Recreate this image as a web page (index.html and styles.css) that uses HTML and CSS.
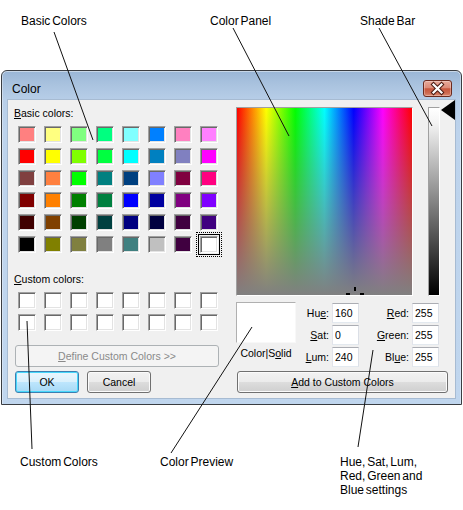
FILE: index.html
```html
<!DOCTYPE html>
<html>
<head>
<meta charset="utf-8">
<link rel="stylesheet" href="styles.css">
</head>
<body>
<div class="page">
  <div class="window">
    <div class="titlebar">
      <span class="title">Color</span>
      <button class="close" aria-label="Close">
        <svg width="29" height="17" viewBox="0 0 29 17">
          <path d="M10.5 4.5 L18.5 12.5 M18.5 4.5 L10.5 12.5" stroke="#4a1a12" stroke-width="4.2" stroke-linecap="square" fill="none"/>
          <path d="M10.5 4.5 L18.5 12.5 M18.5 4.5 L10.5 12.5" stroke="#ffffff" stroke-width="2.2" stroke-linecap="square" fill="none"/>
        </svg>
      </button>
    </div>
    <div class="client">
      <div class="left">
        <div class="label"><u>B</u>asic colors:</div>
        <div class="swatches">
          <span class="sw" style="background:#ff8080"></span><span class="sw" style="background:#ffff80"></span><span class="sw" style="background:#80ff80"></span><span class="sw" style="background:#00ff80"></span><span class="sw" style="background:#80ffff"></span><span class="sw" style="background:#0080ff"></span><span class="sw" style="background:#ff80c0"></span><span class="sw" style="background:#ff80ff"></span>
          <span class="sw" style="background:#ff0000"></span><span class="sw" style="background:#ffff00"></span><span class="sw" style="background:#80ff00"></span><span class="sw" style="background:#00ff40"></span><span class="sw" style="background:#00ffff"></span><span class="sw" style="background:#0080c0"></span><span class="sw" style="background:#8080c0"></span><span class="sw" style="background:#ff00ff"></span>
          <span class="sw" style="background:#804040"></span><span class="sw" style="background:#ff8040"></span><span class="sw" style="background:#00ff00"></span><span class="sw" style="background:#008080"></span><span class="sw" style="background:#004080"></span><span class="sw" style="background:#8080ff"></span><span class="sw" style="background:#800040"></span><span class="sw" style="background:#ff0080"></span>
          <span class="sw" style="background:#800000"></span><span class="sw" style="background:#ff8000"></span><span class="sw" style="background:#008000"></span><span class="sw" style="background:#008040"></span><span class="sw" style="background:#0000ff"></span><span class="sw" style="background:#0000a0"></span><span class="sw" style="background:#800080"></span><span class="sw" style="background:#8000ff"></span>
          <span class="sw" style="background:#400000"></span><span class="sw" style="background:#804000"></span><span class="sw" style="background:#004000"></span><span class="sw" style="background:#004040"></span><span class="sw" style="background:#000080"></span><span class="sw" style="background:#000040"></span><span class="sw" style="background:#400040"></span><span class="sw" style="background:#400080"></span>
          <span class="sw" style="background:#000000"></span><span class="sw" style="background:#808000"></span><span class="sw" style="background:#808040"></span><span class="sw" style="background:#808080"></span><span class="sw" style="background:#408080"></span><span class="sw" style="background:#c0c0c0"></span><span class="sw" style="background:#400040"></span><span class="sw sel" style="background:#ffffff"></span>
        </div>
        <div class="label custom-label"><u>C</u>ustom colors:</div>
        <div class="swatches custom">
          <span class="sw"></span><span class="sw"></span><span class="sw"></span><span class="sw"></span><span class="sw"></span><span class="sw"></span><span class="sw"></span><span class="sw"></span>
          <span class="sw"></span><span class="sw"></span><span class="sw"></span><span class="sw"></span><span class="sw"></span><span class="sw"></span><span class="sw"></span><span class="sw"></span>
        </div>
        <button class="btn define" disabled><u>D</u>efine Custom Colors &gt;&gt;</button>
        <div class="btn-row">
          <button class="btn default">OK</button>
          <button class="btn">Cancel</button>
        </div>
      </div>
      <div class="right">
        <div class="picker">
          <div class="spectrum">
            <svg class="cross" width="22" height="11" viewBox="0 0 22 11">
              <rect x="10" y="2" width="2" height="4" fill="#000"/>
              <rect x="2" y="8" width="4" height="2" fill="#000"/>
              <rect x="16" y="8" width="4" height="2" fill="#000"/>
            </svg>
          </div>
          <div class="shade"><span class="arrow"></span></div>
        </div>
        <div class="fields">
          <div class="preview"></div>
          <div class="flabel">Hu<u>e</u>:</div><input class="num" type="text" value="160">
          <div class="flabel"><u>R</u>ed:</div><input class="num" type="text" value="255">
          <div class="flabel"><u>S</u>at:</div><input class="num" type="text" value="0">
          <div class="flabel"><u>G</u>reen:</div><input class="num" type="text" value="255">
          <div class="caption">Color|S<u>o</u>lid</div>
          <div class="flabel"><u>L</u>um:</div><input class="num" type="text" value="240">
          <div class="flabel">Bl<u>u</u>e:</div><input class="num" type="text" value="255">
        </div>
        <button class="btn add"><u>A</u>dd to Custom Colors</button>
      </div>
    </div>
  </div>

  <div class="note n-basic">Basic Colors</div>
  <div class="note n-panel">Color Panel</div>
  <div class="note n-shade">Shade Bar</div>
  <div class="note n-custom">Custom Colors</div>
  <div class="note n-preview">Color Preview</div>
  <div class="note n-settings">Hue, Sat, Lum,<br>Red, Green and<br>Blue settings</div>

  <svg class="leaders" width="463" height="510" viewBox="0 0 463 510">
    <g stroke="#111" stroke-width="1" fill="none">
      <line x1="54" y1="32" x2="93" y2="140"/>
      <line x1="233" y1="28" x2="289" y2="136"/>
      <line x1="379" y1="28" x2="432" y2="126"/>
      <line x1="27" y1="321" x2="32" y2="449"/>
      <line x1="252" y1="327" x2="171" y2="453"/>
      <line x1="373" y1="350" x2="358" y2="447"/>
    </g>
  </svg>
</div>
</body>
</html>
```
FILE: styles.css
```css
html, body {
  margin: 0;
  padding: 0;
  background: #ffffff;
}

.page {
  position: relative;
  width: 463px;
  height: 510px;
  overflow: hidden;
  font-family: "Liberation Sans", Arial, sans-serif;
  color: #000;
}

.window {
  margin: 70px 0 0 1px;
  width: 461px;
  height: 335px;
  box-sizing: border-box;
  border: 1px solid #3a3d42;
  border-radius: 6px 6px 0 0;
  padding: 0 6px 6px 6px;
  background: linear-gradient(to bottom, #9ab6d6 0px, #aac3df 14px, #b7cee8 29px, #bdd3ec 60px, #c0d6ee 100%);
  box-shadow: inset 0 1px 0 rgba(255,255,255,0.45), inset 1px 0 0 rgba(255,255,255,0.35), inset -1px 0 0 rgba(255,255,255,0.35);
  font-size: 10.5px;
}

.titlebar {
  height: 29px;
  box-sizing: border-box;
  padding: 6px 3px 0 4px;
  display: flex;
  align-items: center;
  justify-content: space-between;
}

.title {
  font-size: 12px;
  color: #000;
}

.close {
  width: 29px;
  height: 17px;
  padding: 0;
  margin: 0;
  border: 1px solid #6b2a1e;
  border-radius: 3px;
  background: linear-gradient(to bottom, #e8a99a 0%, #dc8b78 45%, #c8553c 52%, #cd6a50 80%, #dd8a70 100%);
  box-shadow: inset 0 0 0 1px rgba(255,255,255,0.3);
  display: flex;
  align-items: center;
  justify-content: center;
  box-sizing: border-box;
}

.close svg {
  display: block;
  margin: -1px;
}

.client {
  height: 298px;
  box-sizing: border-box;
  background: #f0f0f0;
  display: flex;
  padding-left: 6px;
  box-shadow: 0 0 0 1px #a7bbd2;
}

.left {
  width: 205px;
  display: flex;
  flex-direction: column;
}

.label {
  line-height: 13px;
  margin-top: 7px;
  white-space: nowrap;
}

.custom-label {
  margin-top: 20px;
}

.swatches {
  margin: 6px 0 0 4px;
  display: grid;
  grid-template-columns: repeat(8, 18px);
  grid-auto-rows: 17px;
  column-gap: 8px;
  row-gap: 5px;
}

.sw {
  display: block;
  box-sizing: border-box;
  background: #ffffff;
  border-top: 1px solid #a0a0a0;
  border-left: 1px solid #a0a0a0;
  border-right: 1px solid #ffffff;
  border-bottom: 1px solid #ffffff;
  box-shadow: inset 1px 1px 0 #696969, inset -1px -1px 0 #e3e3e3;
}

.sw.sel {
  position: relative;
  outline: 1px solid #000;
  outline-offset: 1px;
}

.sw.sel::after {
  content: "";
  position: absolute;
  left: -5px;
  top: -5px;
  right: -5px;
  bottom: -5px;
  border: 1px dotted #000;
}

.btn {
  font-family: "Liberation Sans", Arial, sans-serif;
  font-size: 10.5px;
  color: #000;
  height: 22px;
  padding: 0;
  margin: 0;
  box-sizing: border-box;
  border: 1px solid #707070;
  border-radius: 3px;
  background: linear-gradient(to bottom, #f2f2f2 0%, #ebebeb 50%, #dddddd 50%, #cfcfcf 100%);
  box-shadow: inset 0 0 0 1px #fbfbfb;
}

.btn u {
  text-decoration: underline;
}

.define {
  margin: 14px 0 0 1px;
  width: 204px;
  color: #8a8a8a;
  border-color: #adb2b5;
  background: #f4f4f4;
  box-shadow: none;
}

.btn-row {
  display: flex;
  gap: 8px;
  margin: 4px 0 0 1px;
}

.btn-row .btn {
  width: 64px;
}

.btn.default {
  border-color: #3c7fb1;
  background: linear-gradient(to bottom, #eaf6fd 0%, #d9f0fc 50%, #bee6fd 50%, #a7d9f5 100%);
  box-shadow: inset 0 0 0 1px #48d8fb;
}

.right {
  margin-left: 17px;
  width: 219px;
  display: flex;
  flex-direction: column;
}

.picker {
  display: flex;
  margin-top: 7px;
}

.spectrum {
  position: relative;
  width: 177px;
  height: 189px;
  box-sizing: border-box;
  border-top: 1px solid #a0a0a0;
  border-left: 1px solid #a0a0a0;
  border-right: 1px solid #ffffff;
  border-bottom: 1px solid #ffffff;
  overflow: hidden;
  background:
    linear-gradient(to bottom, rgba(128,128,128,0) 0%, #808080 100%),
    linear-gradient(to right, #ff0000 0%, #ffff00 16.67%, #00ff00 33.33%, #00ffff 50%, #0000ff 66.67%, #ff00ff 83.33%, #ff0000 100%);
}

.cross {
  position: absolute;
  left: 107px;
  top: 177px;
  display: block;
}

.shade {
  position: relative;
  margin-left: 15px;
  width: 12px;
  height: 189px;
  box-sizing: border-box;
  border-top: 1px solid #a0a0a0;
  border-left: 1px solid #a0a0a0;
  border-right: 1px solid #ffffff;
  border-bottom: 1px solid #ffffff;
  background: linear-gradient(to bottom, #ffffff 0%, #f4f4f4 8%, #000000 100%);
}

.arrow {
  position: absolute;
  left: 12px;
  top: -8px;
  width: 0;
  height: 0;
  border-top: 10px solid transparent;
  border-bottom: 10px solid transparent;
  border-right: 14px solid #000;
}

.fields {
  margin-top: 7px;
  display: grid;
  grid-template-columns: 60px 36px 27px 53px 27px;
  grid-template-rows: 20px 20px 20px;
  row-gap: 2px;
}

.preview {
  grid-row: 1 / span 2;
  grid-column: 1;
  height: 41px;
  margin-top: -1px;
  box-sizing: border-box;
  background: #ffffff;
  border-top: 1px solid #b0b0b0;
  border-left: 1px solid #b0b0b0;
  border-right: 1px solid #f8f8f8;
  border-bottom: 1px solid #f8f8f8;
}

.caption {
  grid-column: 1;
  align-self: start;
  text-align: center;
  line-height: 12px;
  white-space: nowrap;
}

.flabel {
  text-align: right;
  padding-right: 3px;
  line-height: 20px;
  white-space: nowrap;
}

.num {
  width: 27px;
  height: 20px;
  box-sizing: border-box;
  margin: 0;
  padding: 0 0 0 2px;
  border: 1px solid;
  border-color: #abadb3 #dbdfe6 #e3e9ef #e2e3ea;
  background: #ffffff;
  font-family: "Liberation Sans", Arial, sans-serif;
  font-size: 10.5px;
  color: #000;
  outline: none;
}

.add {
  margin: 4px 0 0 1px;
  width: 211px;
}

.note {
  position: absolute;
  font-size: 12px;
  line-height: 14px;
  word-spacing: -1.5px;
  white-space: nowrap;
  color: #000;
}

.n-basic { left: 21px; top: 14px; }
.n-panel { left: 210px; top: 14px; }
.n-shade { left: 360px; top: 14px; }
.n-custom { left: 20px; top: 455px; }
.n-preview { left: 160px; top: 455px; }
.n-settings { left: 340px; top: 455px; }

.leaders {
  position: absolute;
  left: 0;
  top: 0;
  pointer-events: none;
}
```
